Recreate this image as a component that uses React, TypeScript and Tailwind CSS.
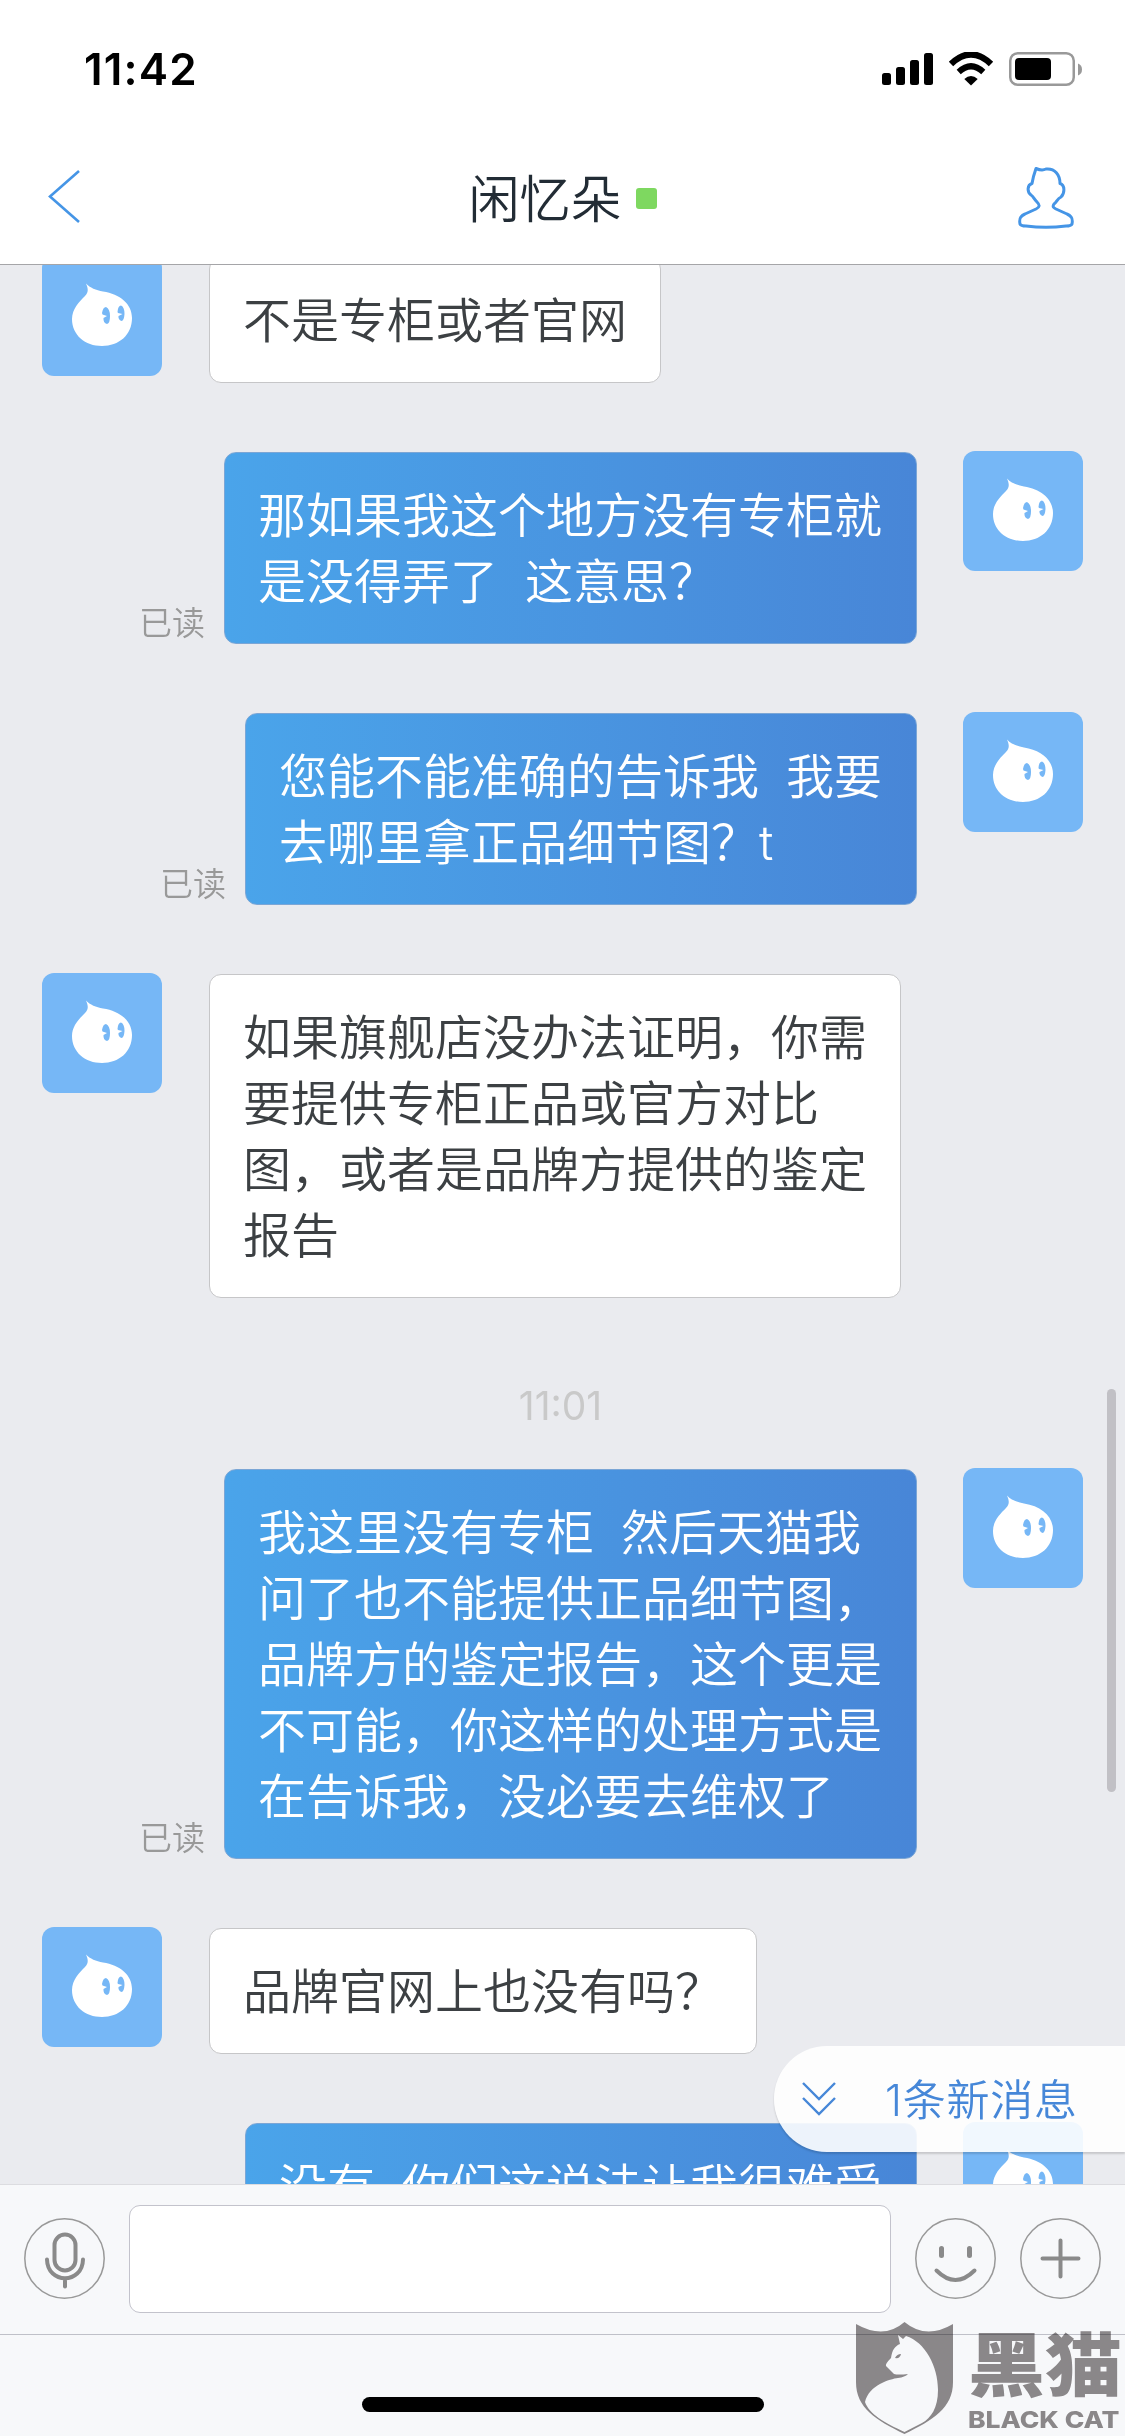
import type { ReactNode } from "react";

type Message = {
  from: "me" | "them" | "time";
  lines: string[];
  read?: boolean;
};

const messages: Message[] = [
  { from: "them", lines: ["不是专柜或者官网"] },
  { from: "me", read: true, lines: ["那如果我这个地方没有专柜就", "是没得弄了  这意思？"] },
  { from: "me", read: true, lines: ["您能不能准确的告诉我  我要", "去哪里拿正品细节图？t"] },
  { from: "them", lines: ["如果旗舰店没办法证明，你需", "要提供专柜正品或官方对比", "图，或者是品牌方提供的鉴定", "报告"] },
  { from: "time", lines: ["11:01"] },
  {
    from: "me",
    read: true,
    lines: [
      "我这里没有专柜  然后天猫我",
      "问了也不能提供正品细节图，",
      "品牌方的鉴定报告，这个更是",
      "不可能，你这样的处理方式是",
      "在告诉我，没必要去维权了",
    ],
  },
  { from: "them", lines: ["品牌官网上也没有吗？"] },
  { from: "me", lines: ["没有  你们这说法让我很难受"] },
];

function StatusBar() {
  return (
    <div className="flex h-[132px] items-start justify-between pl-[84px] pr-[42px]">
      <span className="mt-[42px] text-[44px] font-semibold leading-[54px] tracking-[1.2px] text-black">11:42</span>
      <div className="mt-[52px] flex items-start">
        <svg width="51" height="34" viewBox="0 0 51 34">
          <rect x="0" y="21" width="9" height="12" rx="2.5" />
          <rect x="14" y="15" width="9" height="18" rx="2.5" />
          <rect x="28" y="8" width="9" height="25" rx="2.5" />
          <rect x="42" y="1" width="9" height="32" rx="2.5" />
        </svg>
        <svg className="ml-[15px]" width="46" height="34" viewBox="0 0 46 34">
          <path d="M3 12Q23-7 43 12" fill="none" stroke="#000" strokeWidth="6.4" />
          <path d="M10.7 20Q23 8.500 35.300 20" fill="none" stroke="#000" strokeWidth="6" />
          <path d="M16.300 27Q23 21 29.700 27L23 33.500Z" />
        </svg>
        <svg className="ml-[15px]" width="74" height="34" viewBox="0 0 74 34">
          <rect x="1.250" y="1.250" width="63.500" height="31.500" rx="7.500" fill="none" stroke="#999" strokeWidth="2.500" />
          <rect x="6" y="6" width="36" height="22" rx="4" />
          <path d="M69 11.500Q73 13 73 17.500Q73 22 69 23.500Z" fill="#999" />
        </svg>
      </div>
    </div>
  );
}

function NavBar() {
  return (
    <div className="flex h-[132px] items-center justify-between pl-[46px] pr-[50px]">
      <svg className="mb-[4px]" width="56" height="56" viewBox="0 0 56 56" fill="none" stroke="#4595e6" strokeWidth="2.600">
        <path d="M33 3L4 28.500L33 54" />
      </svg>
      <h1 className="flex items-center pt-[3px] pl-[6px] text-[51px] font-[350] leading-[60px] text-[#222c35]">
        闲忆朵
        <span className="mb-[3px] ml-[14px] size-[21px] rounded-[3px] bg-[#7ed860]" />
      </h1>
      <svg className="mb-[2px]" width="58" height="64" viewBox="0 0 58 64" fill="none" stroke="#4595e6" strokeWidth="3" strokeLinejoin="round">
        <path d="M19 3.500Q25 6 29 4C38 3 43 10 43 18.500C48 20 48 28 44 32C40 34 40 37 37 39C35 42 37 43 39 44L50 49C55 51 56 54 55 59Q54 61 49 61Q29 63.500 9 61Q4 61 3 59C2 54 3 51 8 49L19 44C23 42 23 40 20 37C17 34 16 31 14 30C10 27 10 20 15 18.500Q16 12 19 3.500Z" />
      </svg>
    </div>
  );
}

function Avatar() {
  return (
    <div className="size-[120px] shrink-0 rounded-[12px] bg-[#76b7f6]">
      <svg width="120" height="120" viewBox="0 0 120 120">
        <path
          d="M44 27.500C48 32 54 34 61 35.500C78 38 90 48 90 62C90 79 77 90 60 90C43 90 30 79 30 63C30 53 37 46 43 40C47 36 46 32 44 27.500Z"
          fill="#fff"
        />
        <g fill="#76b7f6">
          <path d="M60 57Q61 51 64 51Q68 53 68 60Q68 67.500 65 68Q61 67 61.500 62L65 60L60.500 58.500Z" />
          <path d="M75.500 56Q76 49.500 79 49.500Q82.500 51 82.500 58Q82 65 79.500 65Q76 63.500 76.500 60L80.500 58L76 57Z" />
        </g>
      </svg>
    </div>
  );
}

function Bubble({ mine, lines }: { mine: boolean; lines: string[] }) {
  const tone = mine
    ? "border-[#7ba6d6] bg-linear-to-r from-[#4aa4ea] to-[#4886d7] pr-[34px] text-white"
    : "border-[#c6c6c8] bg-white pr-[33px] text-[#3c4043]";
  return (
    <div className={`mt-[1px] rounded-[12px] border pl-[33px] pt-[30px] pb-[28px] text-[48px] font-[350] leading-[66px] ${tone}`}>
      {lines.map((line) => (
        <p key={line} className="whitespace-pre">
          {line}
        </p>
      ))}
    </div>
  );
}

function Row({ message }: { message: Message }) {
  if (message.from === "time") {
    return (
      <p className="mb-[38px] pt-[16px] pr-[4px] text-center text-[39px] font-normal leading-[48px] text-[#c9c9c9]">
        {message.lines[0]}
      </p>
    );
  }
  if (message.from === "them") {
    return (
      <div className="mb-[68px] flex items-start gap-[47px]">
        <Avatar />
        <Bubble mine={false} lines={message.lines} />
      </div>
    );
  }
  return (
    <div className="mb-[68px] flex items-start justify-end">
      {message.read && (
        <span className="mr-[19px] -mb-[1px] self-end text-[33px] font-[350] leading-[44px] text-[#999]">已读</span>
      )}
      <Bubble mine lines={message.lines} />
      <div className="ml-[46px]">
        <Avatar />
      </div>
    </div>
  );
}

function RoundButton({ children }: { children: ReactNode }) {
  return (
    <button className="size-[81px] shrink-0">
      <svg width="81" height="81" viewBox="-1.5 -1.5 81 81" fill="none" stroke="#8a8a8a" strokeWidth="4" strokeLinecap="round">
        <circle cx="39" cy="39" r="39.700" stroke="#999" strokeWidth="1.500" />
        {children}
      </svg>
    </button>
  );
}

function Watermark() {
  return (
    <div className="absolute bottom-0 right-0 flex h-[116px] w-[270px] text-[#8f8b8c] mix-blend-multiply">
      <svg width="99" height="116" viewBox="0 0 99 116">
        <path d="M1 4Q29 20 49.500 2Q71 20 98 4V62C98 88 78 100 49.500 114C21 100 1 88 1 62Z" fill="currentColor" />
        <path
          d="M10 82C14 65 35 59 43 58Q50 57 53 54Q43 55 39 54L31 46Q30 44 36 38C37 30 40 26 45 24L43 15L48 19L51 16C70 22 83 46 83 70C83 88 76 98 67 103L49.500 112C30 103 14 94 10 82Z"
          fill="#fff"
        />
        <path d="M40 38Q42 34 46 34Q45 39 40 38Z" fill="currentColor" />
      </svg>
      <div className="ml-[14px] pt-[8px]">
        <p className="origin-top-left scale-y-90 whitespace-nowrap text-[77px] font-black leading-[84px]">黑猫</p>
        <p className="-mt-[4px] origin-left scale-x-[1.15] whitespace-nowrap text-[23px] font-extrabold leading-[24px]">
          BLACK CAT
        </p>
      </div>
    </div>
  );
}

export default function App() {
  return (
    <div className="relative flex h-[2436px] w-[1125px] flex-col overflow-hidden bg-[#eaebef] font-[Inter,'Noto_Sans_CJK_SC',sans-serif]">
      <header className="h-[265px] shrink-0 border-b border-[#a5a5a8] bg-white">
        <StatusBar />
        <NavBar />
      </header>

      <main className="relative flex-1 overflow-hidden">
        <div className="-mt-[9px] px-[42px]">
          {messages.map((m, i) => (
            <Row key={i} message={m} />
          ))}
        </div>
        <div className="absolute right-[9px] top-[1124px] h-[403px] w-[9px] rounded-full bg-[#c1c0c5]" />
        <button className="absolute right-0 top-[1781px] flex h-[106px] w-[351px] items-center rounded-l-full bg-white/90 pl-[28px] text-[43px] font-[350] tracking-[0.8px] text-[#4687d8] shadow-[0_2px_2px_rgba(0,0,0,0.15)]">
          <svg width="34" height="34" viewBox="0 0 34 34" fill="none" stroke="currentColor" strokeWidth="2.400">
            <path d="M1 1L17 17L33 1M1 16L17 32L33 16" />
          </svg>
          <span className="ml-[49px] whitespace-nowrap pt-[3px]">1条新消息</span>
        </button>
      </main>

      <footer className="h-[252px] shrink-0 bg-[#f7f8fa]">
        <div className="flex h-[151px] items-center border-y border-t-[#dcdce0] border-b-[#bfc0c8] px-[24px] pb-[2px]">
          <RoundButton>
            <rect x="29" y="15" width="21" height="36" rx="10.500" />
            <path d="M21.500 40C22 65 57 65 57.500 40M39.500 59V67" />
          </RoundButton>
          <div className="ml-[24px] h-[108px] flex-1 rounded-[11px] border border-[#c3c3cc] bg-white" />
          <div className="ml-[24px] flex gap-[24px]">
            <RoundButton>
              <path d="M25 29V36M53 29V36" strokeWidth="5" />
              <path d="M20 51Q39 70 58 51" />
            </RoundButton>
            <RoundButton>
              <path d="M39 21V57M21 39H57" />
            </RoundButton>
          </div>
        </div>
        <div className="mx-auto mt-[62px] h-[15px] w-[402px] rounded-full bg-black" />
      </footer>
      <Watermark />
    </div>
  );
}
